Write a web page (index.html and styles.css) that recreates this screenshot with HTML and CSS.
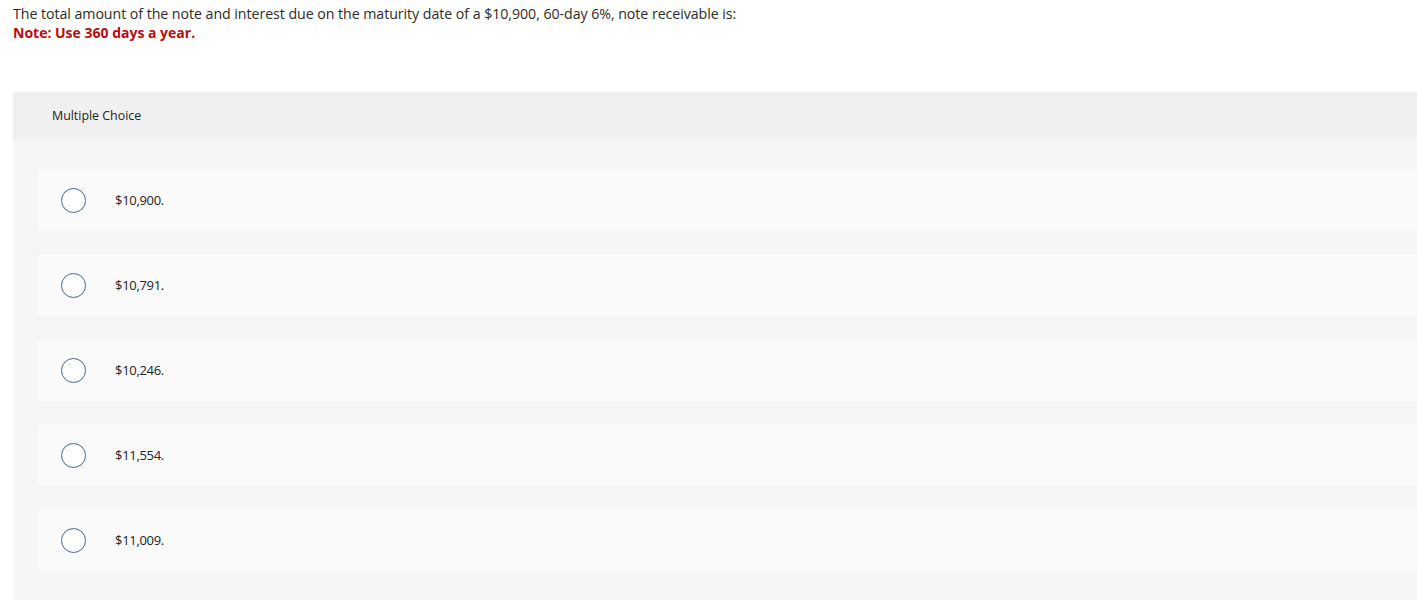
FILE: index.html
```html
<!DOCTYPE html>
<html>
<head>
<meta charset="utf-8">
<link rel="stylesheet" href="styles.css">
</head>
<body>
<div class="page">
  <div class="prompt">
    <p class="question">The total amount of the note and interest due on the maturity date of a $10,900, 60-day 6%, note receivable is:</p>
    <p class="note">Note: Use 360 days a year.</p>
  </div>
  <div class="mc">
    <div class="mc-head">Multiple Choice</div>
    <div class="mc-body">
      <div class="opt"><span class="radio"></span><span class="label">$10,900.</span></div>
      <div class="opt"><span class="radio"></span><span class="label">$10,791.</span></div>
      <div class="opt"><span class="radio"></span><span class="label">$10,246.</span></div>
      <div class="opt"><span class="radio"></span><span class="label">$11,554.</span></div>
      <div class="opt"><span class="radio"></span><span class="label">$11,009.</span></div>
    </div>
  </div>
</div>
</body>
</html>
```
FILE: styles.css
```css
html, body {
  margin: 0;
  padding: 0;
  background: #ffffff;
  overflow: hidden;
}
body {
  font-family: "Open Sans", "Liberation Sans", sans-serif;
  color: #222;
}
.page {
  padding: 4px 0 0 13px;
}
.prompt p {
  margin: 0;
}
.question {
  font-size: 14.2px;
  line-height: 19px;
  color: #2b2b2b;
  letter-spacing: -0.05px;
}
.note {
  font-size: 14px;
  line-height: 19px;
  font-weight: 700;
  color: #b80c0c;
}
.mc {
  margin-top: 50px;
  background: #f5f5f5;
}
.mc-head {
  background: #f0f0f0;
  height: 47px;
  box-sizing: border-box;
  padding: 15px 0 0 39px;
  font-size: 12.4px;
  color: #222;
}
.mc-body {
  padding: 30px 0 40px 24px;
  display: flex;
  flex-direction: column;
  gap: 23px;
}
.opt {
  background: #fafafa;
  border-radius: 4px 0 0 4px;
  height: 62px;
  display: flex;
  align-items: center;
  padding-left: 24px;
}
.radio {
  width: 23px;
  height: 23px;
  border: 1.5px solid #3d6a99;
  border-radius: 50%;
  background: #fff;
  flex: none;
}
.label {
  margin-left: 29px;
  font-size: 13px;
  color: #222;
  letter-spacing: -0.3px;
}
```
